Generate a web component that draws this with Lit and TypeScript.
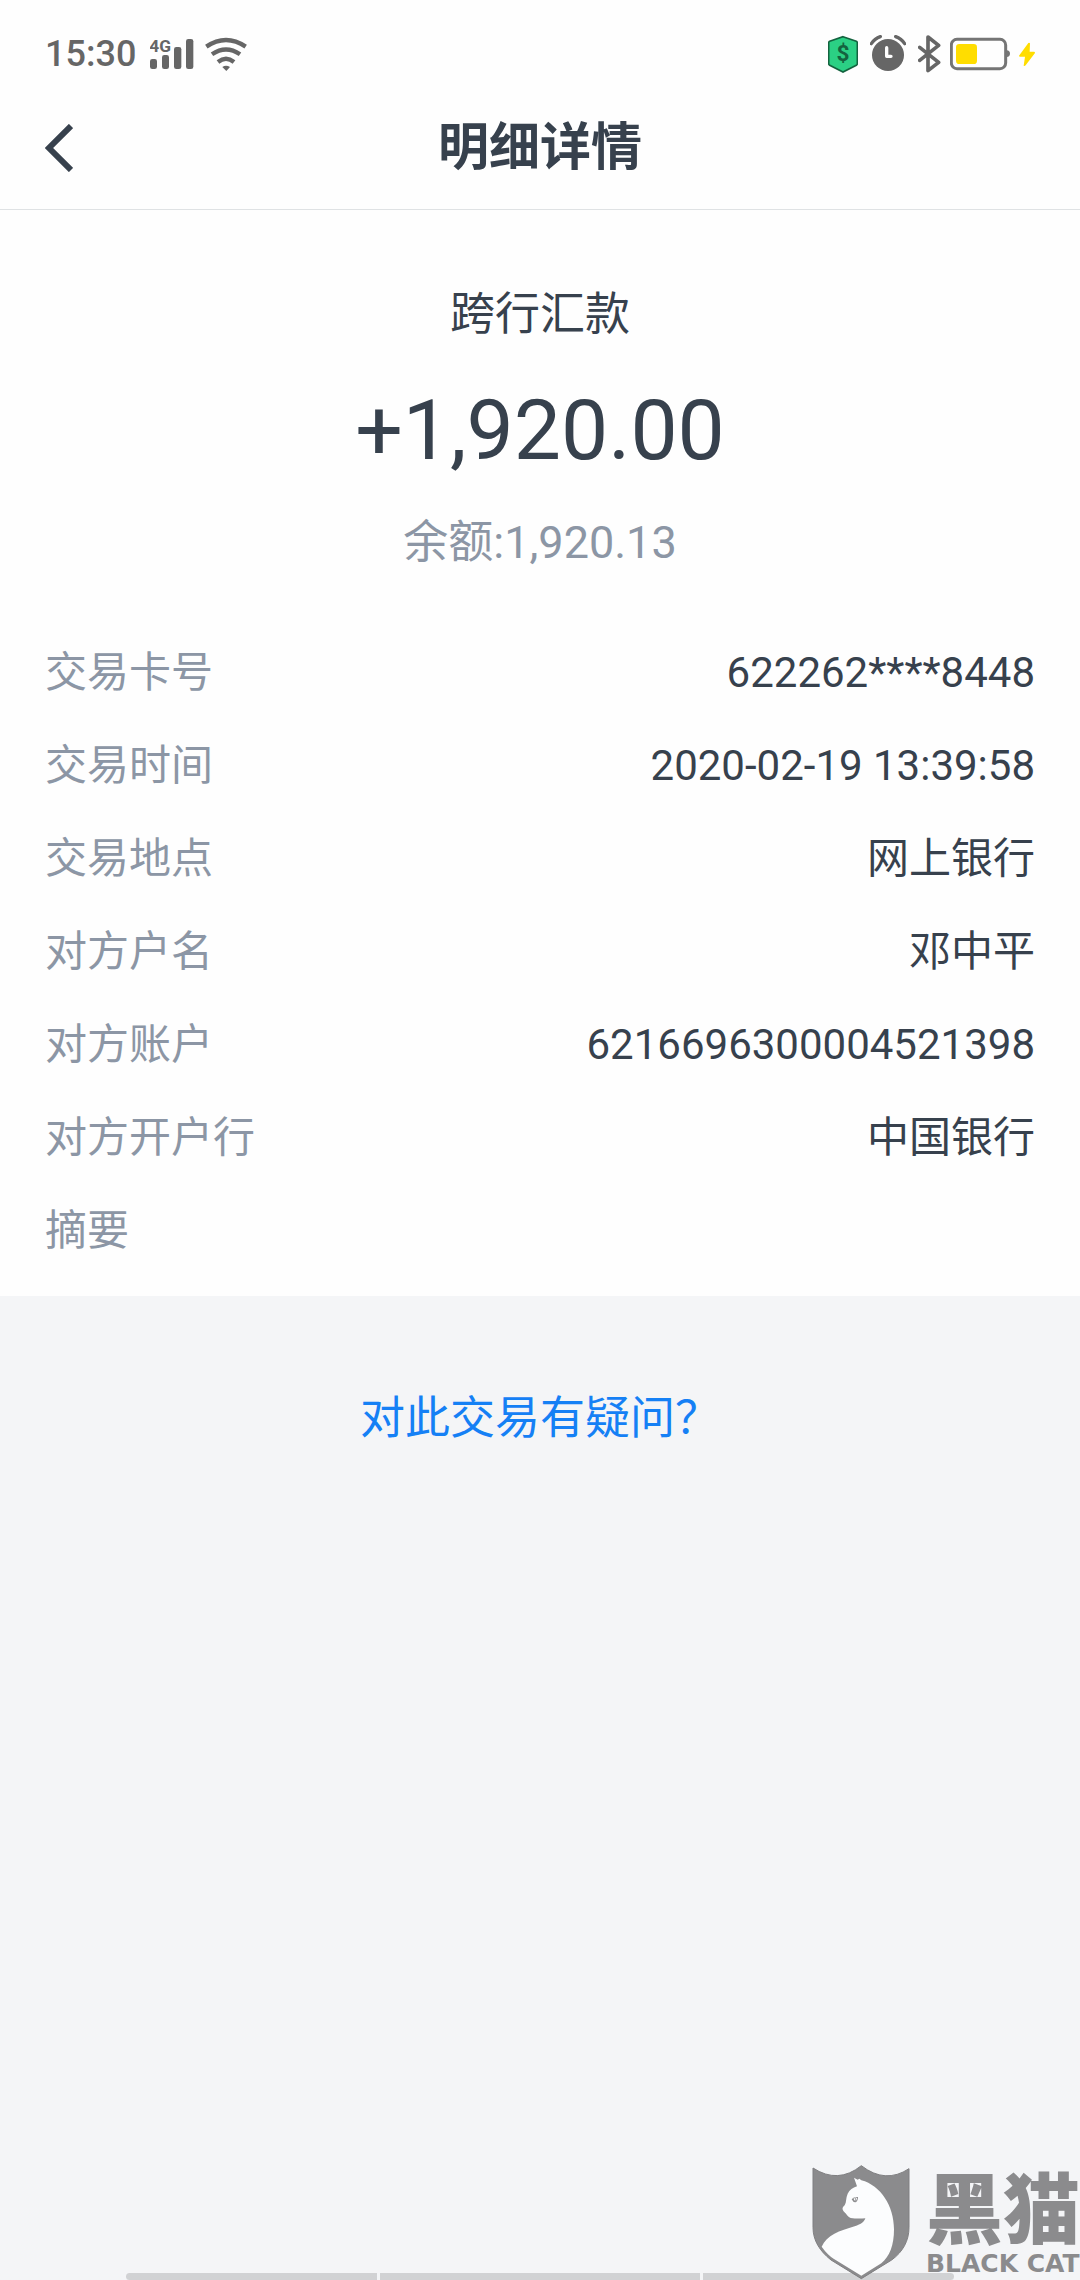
import { LitElement, html, css, svg } from 'lit';
import { customElement, property } from 'lit/decorators.js';

@customElement('status-bar')
export class StatusBar extends LitElement {
  @property() time = '';

  static styles = css`
    :host {
      display: flex;
      justify-content: space-between;
      align-items: center;
      height: 60px;
      padding: 24px 45px 0;
      color: #666;
    }

    .group {
      display: flex;
      align-items: center;
    }

    .time {
      font-size: 36px;
      line-height: 40px;
      font-weight: 500;
      margin-right: 14px;
    }

    .icon {
      display: block;
      height: 38px;
    }

    .signal {
      width: 44px;
      margin-right: 11px;
    }

    .network {
      font: 700 52px Roboto, sans-serif;
    }

    .dollar {
      font: 700 68px Roboto, sans-serif;
    }

    .wifi {
      width: 42px;
    }

    .shield {
      width: 30px;
      margin-right: 12px;
    }

    .alarm {
      width: 36px;
      margin-right: 12px;
    }

    .bluetooth {
      width: 23px;
      margin-right: 9px;
    }

    .battery {
      width: 60px;
      margin-right: 9px;
    }

    .bolt {
      width: 16px;
    }
  `;

  render() {
    return html`
      <div class="group">
        <span class="time">${this.time}</span>
        <svg class="icon signal" viewBox="357 45 132 114" fill="#666">
          <text class="network" x="355" y="95">4G</text>
          <rect x="357" y="117" width="21" height="30" rx="7" />
          <rect x="393" y="105" width="21" height="42" rx="7" />
          <rect x="429" y="81" width="22" height="66" rx="7" />
          <rect x="465" y="57" width="22" height="90" rx="7" />
        </svg>
        <svg class="icon wifi" viewBox="522 45 126 114" fill="none" stroke="#666" stroke-width="13">
          <path d="M526 80 Q585 40 644 80" />
          <path d="M543 103 Q585 74 627 103" />
          <path d="M561 126 Q585 107 609 126" />
          <path d="M574 141 Q585 133 597 141 L586 153Z" fill="#666" stroke="none" />
        </svg>
      </div>
      <div class="group">
        <svg class="icon shield" viewBox="54 45 90 114">
          <path d="M99 50 L139 64 Q142 65 142 69 V131 Q142 134 139 136 L99 156 L59 136 Q56 134 56 131 V69 Q56 65 59 64Z" fill="#2bd084" stroke="#14633f" stroke-width="5" />
          <text class="dollar" x="99" y="124" text-anchor="middle" fill="#14633f">$</text>
        </svg>
        <svg class="icon alarm" viewBox="180 45 108 114">
          <circle cx="234" cy="105" r="48" fill="#666" />
          <path d="M184 71 Q194 56 211 50 M257 50 Q274 56 284 71" fill="none" stroke="#666" stroke-width="10" stroke-linecap="round" />
          <path d="M230 83 V109 H243" fill="none" stroke="#fefefe" stroke-width="10" stroke-linecap="round" stroke-linejoin="round" />
        </svg>
        <svg class="icon bluetooth" viewBox="325 45 69 114">
          <path d="M330 82 L387 127 L355 152 V51 L387 76 L330 121" fill="none" stroke="#666" stroke-width="11" stroke-linejoin="round" stroke-linecap="round" />
        </svg>
        <svg class="icon battery" viewBox="420 45 180 114">
          <rect x="424" y="58" width="163" height="88" rx="17" fill="none" stroke="#757575" stroke-width="9" />
          <path d="M590 91 Q600 92 600 101 Q600 110 590 111Z" fill="#757575" />
          <rect x="438" y="72" width="63" height="60" rx="10" fill="#fd0" />
        </svg>
        <svg class="icon bolt" viewBox="627 45 48 114">
          <path d="M655 69 L627 107 Q627 110 630 110 H645 L641 137 Q643 140 647 136 L675 99 Q675 95 672 95 H659 L660 70 Q658 67 655 69Z" fill="#fd0" />
        </svg>
      </div>
    `;
  }
}

@customElement('black-cat-mark')
export class BlackCatMark extends LitElement {
  static styles = css`
    :host {
      display: flex;
      align-items: flex-end;
      gap: 16px;
      color: #8b8b8d;
    }

    .logo {
      display: block;
      width: 98px;
      height: 115px;
    }

    .words {
      display: flex;
      flex-direction: column;
      gap: 9px;
      padding-bottom: 4px;
    }

    .name {
      font: 900 77px/76px 'Noto Sans CJK SC', sans-serif;
    }

    .latin {
      font: 700 25px/24px 'DejaVu Sans', sans-serif;
    }
  `;

  render() {
    return html`
      <svg class="logo" viewBox="62 75 294 345">
        ${svg`
          <path d="M65 84 Q140 133 210 77 Q282 133 353 86 V262 C353 303 334 336 301 360 L210 416 L119 360 C86 334 65 302 65 262Z" fill="#8b8b8d" stroke="#7f7f81" stroke-width="3" />
          <path d="M188 113 L199 119 L204 116 L210 121 C268 136 308 198 308 268 C308 315 295 350 270 370 L210 407 L128 357 Q108 344 91 320 C106 286 145 272 190 259 C210 253 219 245 222 235 Q198 237 178 234 C170 231 166 222 158 215 C151 207 153 202 160 196 C166 185 163 174 169 161 C175 149 184 143 197 139Z" fill="#fcfdfe" />
          <path d="M181 178 Q188 169 200 171 Q200 183 193 187 Q186 188 181 178Z" fill="#8b8b8d" />
          <path d="M187 175 Q193 171 197 174 Q197 181 192 184 Q187 183 187 175Z" fill="#fcfdfe" />
          <path d="M191 174 Q195 178 191 183" fill="none" stroke="#8b8b8d" stroke-width="3" />
        `}
      </svg>
      <div class="words">
        <span class="name">黑猫</span>
        <span class="latin">BLACK CAT</span>
      </div>
    `;
  }
}

@customElement('app-root')
export class AppRoot extends LitElement {
  static styles = css`
    :host {
      display: flex;
      flex-direction: column;
      position: relative;
      min-height: 100vh;
      overflow: hidden;
      background: #f4f5f7;
      color: #37414d;
      font-family: Roboto, 'Noto Sans CJK SC', sans-serif;
    }

    .top,
    .panel {
      background: #fefefe;
    }

    .nav {
      display: grid;
      grid-template-columns: 1fr auto 1fr;
      align-items: center;
      height: 123px;
      padding: 2px 45px 0;
      border-bottom: 1px solid #dfe2e4;
    }

    .back {
      justify-self: start;
      padding: 0;
      border: 0;
      background: none;
      color: inherit;
      cursor: pointer;
    }

    .back svg {
      display: block;
      width: 28px;
      height: 48px;
    }

    .title {
      margin: 0;
      font-size: 51px;
      line-height: 60px;
      font-weight: 700;
    }

    .summary {
      display: flex;
      flex-direction: column;
      align-items: center;
      gap: 32px;
      padding: 75px 45px 57px;
    }

    .kind {
      font-size: 45px;
      line-height: 60px;
    }

    .amount {
      font-size: 84px;
      line-height: 108px;
    }

    .balance {
      font-size: 45px;
      line-height: 52px;
      color: #8c96a5;
    }

    .details {
      margin: 0;
      padding: 0 45px 19px;
      font-size: 42px;
      line-height: 93px;
    }

    .row {
      display: flex;
      justify-content: space-between;
    }

    .label {
      color: #8c96a5;
    }

    .value {
      margin: 0;
    }

    .help {
      display: flex;
      justify-content: center;
      padding-top: 93px;
    }

    .help-link {
      color: #1580f5;
      font-size: 45px;
      line-height: 60px;
      text-decoration: none;
    }

    .gesture {
      position: absolute;
      left: 50%;
      bottom: 0;
      display: grid;
      grid-template-columns: 251px 320px 251px;
      gap: 3px;
      height: 7px;
      transform: translateX(-50%);
    }

    .gesture span {
      background: #d1d2d4;
    }

    .gesture span:first-child {
      border-radius: 4px 0 0 4px;
    }

    .gesture span:last-child {
      border-radius: 0 4px 4px 0;
    }

    .mark {
      position: absolute;
      right: 0;
      bottom: 0;
    }
  `;

  rows = [
    ['交易卡号', '622262****8448'],
    ['交易时间', '2020-02-19 13:39:58'],
    ['交易地点', '网上银行'],
    ['对方户名', '邓中平'],
    ['对方账户', '6216696300004521398'],
    ['对方开户行', '中国银行'],
    ['摘要', ''],
  ];

  render() {
    return html`
      <header class="top">
        <status-bar time="15:30"></status-bar>
        <div class="nav">
          <button class="back" aria-label="返回">
            <svg viewBox="0 0 28 48" fill="none" stroke="currentColor" stroke-width="6">
              <path d="M26 2 L4 24 L26 46" />
            </svg>
          </button>
          <h1 class="title">明细详情</h1>
        </div>
      </header>

      <main class="panel">
        <div class="summary">
          <div class="kind">跨行汇款</div>
          <div class="amount">+1,920.00</div>
          <div class="balance">余额:1,920.13</div>
        </div>
        <dl class="details">
          ${this.rows.map(
            ([label, value]) => html`
              <div class="row">
                <dt class="label">${label}</dt>
                <dd class="value">${value}</dd>
              </div>
            `
          )}
        </dl>
      </main>

      <div class="help">
        <a class="help-link" href="#">对此交易有疑问？</a>
      </div>

      <div class="gesture"><span></span><span></span><span></span></div>
      <black-cat-mark class="mark"></black-cat-mark>
    `;
  }
}
